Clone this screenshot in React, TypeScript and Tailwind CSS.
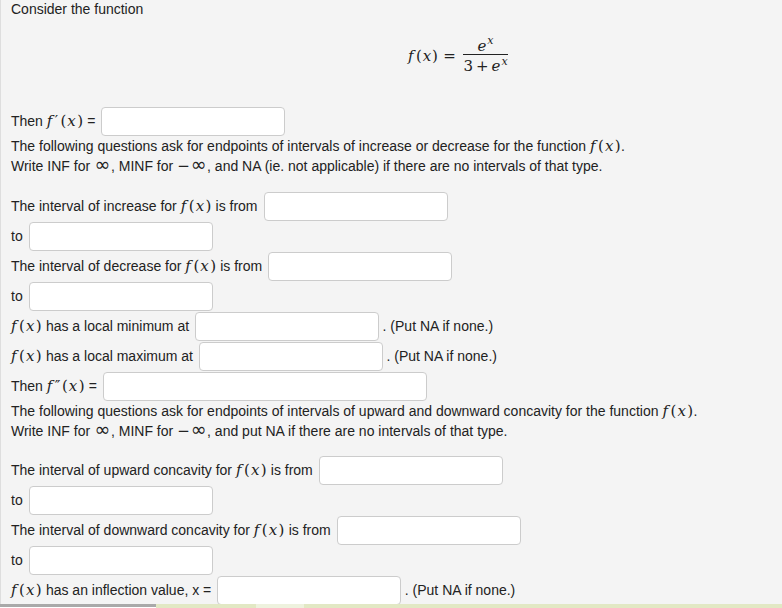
import React from "react";

const serif = "font-['DejaVu_Serif','Liberation_Serif',serif]";

function Fx({ p }: { p?: string }) {
  return (
    <span className={`${serif} text-[15px] leading-none whitespace-nowrap`}>
      <i className="inline-block w-[8px]">f</i>
      {p ? <span className="inline-block" style={{ width: p === "′" ? 5.5 : 7 }}>{p}</span> : null}
      <span className="inline-block w-[6px] text-center">(</span>
      <i className="inline-block w-[10.5px] text-center">x</i>
      <span className="inline-block w-[6.5px] text-center">)</span>
    </span>
  );
}

function Inf({ minus }: { minus?: boolean }) {
  return (
    <span className={`font-['DejaVu_Sans',sans-serif] leading-[10px]`}>
      {minus ? <span className="inline-block w-[13px] text-[15px] leading-[10px] text-center">−</span> : null}
      <span className="inline-block w-[17px] text-[19px] leading-[10px] text-center">∞</span>
    </span>
  );
}

function Box({ w = 184 }: { w?: number }) {
  return (
    <span
      className="block shrink-0 h-[29px] bg-white border border-[#cccccc] rounded-[4px] ml-[6px]"
      style={{ width: w }}
    />
  );
}

function Row({ children }: { children: React.ReactNode }) {
  return <div className="h-[30px] flex items-center whitespace-nowrap">{children}</div>;
}

function Line({ children }: { children: React.ReactNode }) {
  return <div className="h-[20px] leading-[20px] whitespace-nowrap">{children}</div>;
}

function Na() {
  return <span className="ml-[3.5px]">. (Put NA if none.)</span>;
}

export default function App() {
  return (
    <div className="w-[782px] h-[608px] overflow-hidden bg-[#f4f4f4] flex flex-col font-['Liberation_Sans',Arial,sans-serif] text-[14px] text-[#222222]">
      <div className="flex-1 min-h-0 overflow-hidden border-l border-[#dedede] pl-[10px]">
        <div className="h-[18px] leading-[18px]">Consider the function</div>

        <div className="h-[88px] flex items-center pl-[397px]">
          <div className={`${serif} text-[15px] flex items-center leading-[16px] -mt-[13px]`}>
            <span className="whitespace-nowrap">
              <i className="inline-block w-[8px]">f</i>
              <span className="inline-block w-[6px] text-center">(</span>
              <i className="inline-block w-[10px] text-center">x</i>
              <span className="inline-block w-[6px] text-center">)</span>
            </span>
            <span className="ml-[5px] mr-[7px] inline-block w-[13px] text-center">=</span>
            <span className="inline-flex flex-col items-stretch w-[45px] -mt-[2px]">
              <span className="flex justify-center items-end h-[18px] leading-[16px]">
                <i className="inline-block">e</i>
                <i className="inline-block text-[11px] leading-[11px] mb-[8px] ml-[1px]">x</i>
              </span>
              <span className="h-px bg-[#222222]" />
              <span className="flex justify-center items-start h-[18px] leading-[16px] pt-[3px]">
                <span>3</span>
                <span className="mx-[3px]">+</span>
                <i>e</i>
                <i className="text-[11px] leading-[11px] -mt-[2px] ml-[1px]">x</i>
              </span>
            </span>
          </div>
        </div>

        <Row>
          <span>Then <Fx p="′" /> =</span>
          <Box w={184} />
        </Row>
        <Line>
          The following questions ask for endpoints of intervals of increase or decrease for the function <Fx />.
        </Line>
        <Line>
          Write INF for <Inf />, MINF for <Inf minus />, and NA (ie. not applicable) if there are no intervals of that type.
        </Line>
        <div className="h-[15px]" />

        <Row>
          <span>The interval of increase for <Fx /> is from</span>
          <Box />
        </Row>
        <Row>
          <span>to</span>
          <Box />
        </Row>
        <Row>
          <span>The interval of decrease for <Fx /> is from</span>
          <Box />
        </Row>
        <Row>
          <span>to</span>
          <Box />
        </Row>
        <Row>
          <span><Fx /> has a local minimum at</span>
          <Box />
          <Na />
        </Row>
        <Row>
          <span><Fx /> has a local maximum at</span>
          <Box />
          <Na />
        </Row>
        <Row>
          <span>Then <Fx p="″" /> =</span>
          <Box w={324} />
        </Row>
        <Line>
          The following questions ask for endpoints of intervals of upward and downward concavity for the function <Fx />.
        </Line>
        <Line>
          Write INF for <Inf />, MINF for <Inf minus />, and put NA if there are no intervals of that type.
        </Line>
        <div className="h-[14px]" />

        <Row>
          <span>The interval of upward concavity for <Fx /> is from</span>
          <Box />
        </Row>
        <Row>
          <span>to</span>
          <Box />
        </Row>
        <Row>
          <span>The interval of downward concavity for <Fx /> is from</span>
          <Box />
        </Row>
        <Row>
          <span>to</span>
          <Box />
        </Row>
        <Row>
          <span><Fx /> has an inflection value, x =</span>
          <Box />
          <Na />
        </Row>
      </div>

      <div className="h-[4px] flex shrink-0">
        <div className="w-[156px] flex flex-col">
          <div className="h-[3px] bg-[#a9a9a9]" />
          <div className="h-[1px] bg-white" />
        </div>
        <div className="w-[100px] bg-[#e2e8c4]" />
        <div className="w-[48px] bg-[#eef2de]" />
        <div className="flex-1 bg-[#e2e8c4]" />
      </div>
    </div>
  );
}
